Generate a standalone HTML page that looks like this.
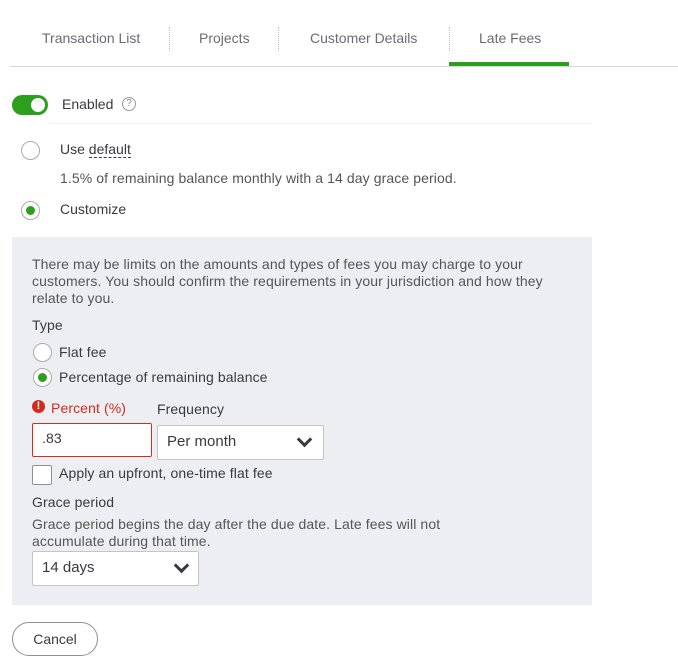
<!DOCTYPE html>
<html><head><style>
body{margin:0;width:678px;height:657px;background:#fff;font-family:"Liberation Sans",sans-serif;color:#393a3d;position:relative;overflow:hidden}
.a{position:absolute;white-space:nowrap}
.t{font-size:14px;color:#6b6c72;top:30px}
.sep{position:absolute;top:27px;height:24px;border-left:1px dotted #bbb}
.r{position:absolute;width:17px;height:17px;border:1px solid #aaa;border-radius:50%;background:#fff}
.r.on::after{content:"";position:absolute;left:4px;top:4px;width:9px;height:9px;border-radius:50%;background:#2ca01c}
.s{font-size:14px;line-height:17px;letter-spacing:0.1px}
.box{position:absolute;background:#fff;border:1px solid #c1c4c9;border-radius:2px;box-sizing:border-box}
.chev{position:absolute;width:8px;height:8px;border-right:3px solid #393a3d;border-bottom:3px solid #393a3d;transform:rotate(45deg)}
</style></head><body>
<div class="a t" style="left:42px">Transaction List</div>
<div class="sep" style="left:169px"></div>
<div class="a t" style="left:199px">Projects</div>
<div class="sep" style="left:278px"></div>
<div class="a t" style="left:310px">Customer Details</div>
<div class="sep" style="left:449px"></div>
<div class="a t" style="left:479px">Late Fees</div>
<div class="a" style="left:10px;top:66px;width:668px;height:1px;background:#d4d7dc"></div>
<div class="a" style="left:449px;top:62px;width:120px;height:4px;background:#2ca01c"></div>

<div class="a" style="left:12px;top:95px;width:36px;height:20px;border-radius:10px;background:#2ca01c"></div>
<div class="a" style="left:31px;top:98px;width:14px;height:14px;border-radius:50%;background:#fff"></div>
<div class="a" style="left:62px;top:96px;font-size:14px">Enabled</div>
<div class="a" style="left:122px;top:97px;width:12px;height:12px;border:1px solid #999;border-radius:50%;font-size:10px;line-height:12px;text-align:center;color:#888">?</div>
<div class="a" style="left:47px;top:123px;width:545px;height:1px;background:#f0f1f3"></div>

<div class="r" style="left:21px;top:141px"></div>
<div class="a" style="left:60px;top:141px;font-size:14px">Use <span style="border-bottom:1px dashed #393a3d">default</span></div>
<div class="a s" style="left:60px;top:170px;color:#555">1.5% of remaining balance monthly with a 14 day grace period.</div>
<div class="r on" style="left:21px;top:201px"></div>
<div class="a" style="left:60px;top:201px;font-size:14px">Customize</div>

<div class="a" style="left:12px;top:237px;width:580px;height:368px;background:#eceef1"></div>
<div class="a s" style="left:32px;top:256px;color:#555">There may be limits on the amounts and types of fees you may charge to your<br>customers. You should confirm the requirements in your jurisdiction and how they<br>relate to you.</div>
<div class="a s" style="left:32px;top:317px">Type</div>
<div class="r" style="left:33px;top:343px"></div>
<div class="a s" style="left:59px;top:344px">Flat fee</div>
<div class="r on" style="left:33px;top:368px"></div>
<div class="a s" style="left:59px;top:369px">Percentage of remaining balance</div>
<div class="a" style="left:32px;top:400px;width:13px;height:13px;border-radius:50%;background:#d52b1e;color:#fff;font-size:11px;font-weight:bold;text-align:center;line-height:13px">!</div>
<div class="a s" style="left:51px;top:400px;color:#d52b1e">Percent (%)</div>
<div class="a s" style="left:157px;top:401px">Frequency</div>
<div class="box" style="left:32px;top:423px;width:120px;height:34px;border-color:#d52b1e"></div>
<div class="a s" style="left:42px;top:430px">.83</div>
<div class="box" style="left:157px;top:425px;width:167px;height:35px"></div>
<div class="a" style="left:167px;top:433px;font-size:15px">Per month</div>
<div class="chev" style="left:299px;top:434px"></div>
<div class="box" style="left:32px;top:465px;width:20px;height:20px;border-color:#8d9096"></div>
<div class="a s" style="left:59px;top:465px">Apply an upfront, one-time flat fee</div>
<div class="a s" style="left:32px;top:494px">Grace period</div>
<div class="a s" style="left:32px;top:516px;color:#555">Grace period begins the day after the due date. Late fees will not<br>accumulate during that time.</div>
<div class="box" style="left:32px;top:551px;width:167px;height:35px"></div>
<div class="a" style="left:42px;top:559px;font-size:15px">14 days</div>
<div class="chev" style="left:176px;top:560px"></div>

<div class="a" style="left:12px;top:622px;width:86px;height:34px;box-sizing:border-box;border:1px solid #8d9096;border-radius:17px;text-align:center;line-height:32px;font-size:14px">Cancel</div>
</body></html>
